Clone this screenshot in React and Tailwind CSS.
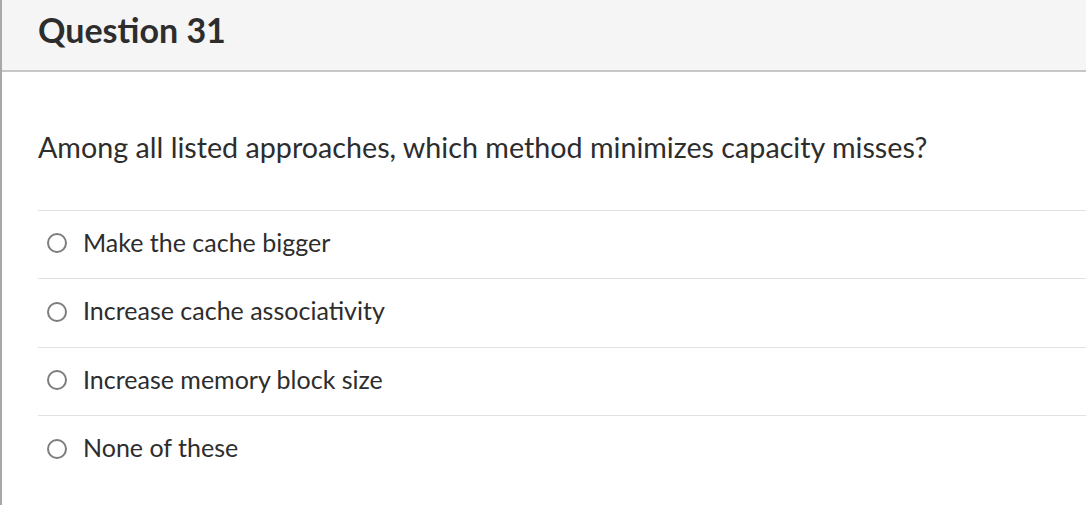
import React from "react";

const options = [
  "Make the cache bigger",
  "Increase cache associativity",
  "Increase memory block size",
  "None of these",
];

function Radio() {
  return (
    <span className="inline-block w-[20px] h-[20px] rounded-full border-2 border-[#7d7d7d] bg-white shrink-0" />
  );
}

export default function App() {
  return (
    <div
      className="w-[1086px] h-[505px] bg-white border-l-2 border-[#a8a8a8] text-[#2d2d2d] overflow-hidden"
      style={{ fontFamily: "Lato, 'Noto Sans', sans-serif" }}
    >
      <div className="h-[72px] bg-[#f5f5f5] border-b-2 border-[#c7c7c7] pl-[36px] flex items-center">
        <h2 className="text-[34px] font-bold text-[#2d2d2d] leading-none pb-[10px]">Question 31</h2>
      </div>
      <div className="pl-[36px]">
        <p className="text-[28.7px] leading-none mt-[61px] mb-[48px]">
          Among all listed approaches, which method minimizes capacity misses?
        </p>
        <div>
          {options.map((o) => (
            <div key={o} className="border-t border-[#e2e2e2] h-[68.5px] flex items-center pl-[9px] gap-[16px] pb-[2px]">
              <Radio />
              <span className="text-[25px] leading-none pb-[2px]">{o}</span>
            </div>
          ))}
        </div>
      </div>
    </div>
  );
}
